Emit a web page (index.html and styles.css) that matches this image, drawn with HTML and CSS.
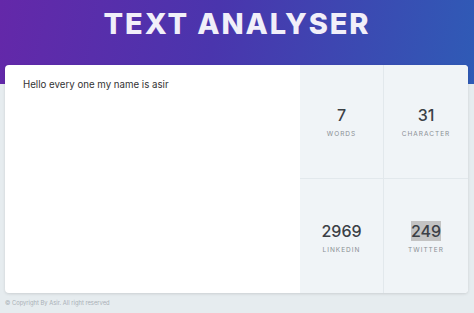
FILE: index.html
```html
<!DOCTYPE html>
<html lang="en">
<head>
    <meta charset="UTF-8">
    <meta name="viewport" content="width=device-width, initial-scale=1.0">
    <title>Text Analyser</title>
    <link rel="stylesheet" href="styles.css">
</head>
<body>

    <header class="hero">
        <h1>TEXT ANALYSER</h1>
    </header>

    <main class="card">
        <div class="editor">Hello every one my name is asir</div>
        <div class="stats">
            <div class="stat">
                <span class="stat-value">7</span>
                <span class="stat-label">Words</span>
            </div>
            <div class="stat">
                <span class="stat-value">31</span>
                <span class="stat-label">Character</span>
            </div>
            <div class="stat">
                <span class="stat-value">2969</span>
                <span class="stat-label">Linkedin</span>
            </div>
            <div class="stat">
                <span class="stat-value"><span class="selected">249</span></span>
                <span class="stat-label">Twitter</span>
            </div>
        </div>
    </main>

    <footer class="footer">© Copyright By Asir. All right reserved</footer>

</body>
</html>
```

FILE: styles.css
```css
body {
    font-family: Inter, "Noto Sans", Arial, sans-serif;
    margin: 0;
    background-color: #e6ecef;
    color: #333;
    height: 313px;
    overflow: hidden;
}
.hero {
    height: 84px;
    background: linear-gradient(100deg, #6428a9 0%, #4a35ad 45%, #2f5bb6 100%);
    text-align: center;
}
.hero h1 {
    margin: 0;
    padding-top: 6px;
    font-size: 29px;
    font-weight: 800;
    letter-spacing: 1.9px;
    color: #f1eff9;
    line-height: 36px;
}
.card {
    display: flex;
    margin: -19px 6px 0 5px;
    height: 228px;
    background-color: #ffffff;
    border-radius: 4px;
    box-shadow: 0 1px 3px rgba(0, 0, 0, 0.12);
    overflow: hidden;
}
.editor {
    flex: 1;
    padding: 13px 18px;
    font-size: 9.7px;
    line-height: 14px;
    color: #333;
}
.stats {
    width: 168px;
    display: grid;
    grid-template-columns: 1fr 1fr;
    grid-template-rows: 114px 1fr;
    background-color: #f0f4f7;
}
.stat {
    display: flex;
    flex-direction: column;
    align-items: center;
    justify-content: center;
    border-right: 1px solid #e2e8ec;
    border-bottom: 1px solid #e2e8ec;
}
.stat:nth-child(2n) {
    border-right: none;
}
.stat:nth-child(n+3) {
    border-bottom: none;
    padding-top: 4px;
}
.stat-value {
    font-size: 16px;
    font-weight: 500;
    line-height: 19px;
    color: #3b4046;
}
.stat-label {
    margin-top: 5px;
    font-size: 6.5px;
    letter-spacing: 1px;
    text-transform: uppercase;
    color: #8a8f94;
}
.selected {
    background-color: #c3c3c3;
}
.footer {
    padding: 6px 5px;
    font-size: 5.8px;
    color: #a9b0b6;
}
```
